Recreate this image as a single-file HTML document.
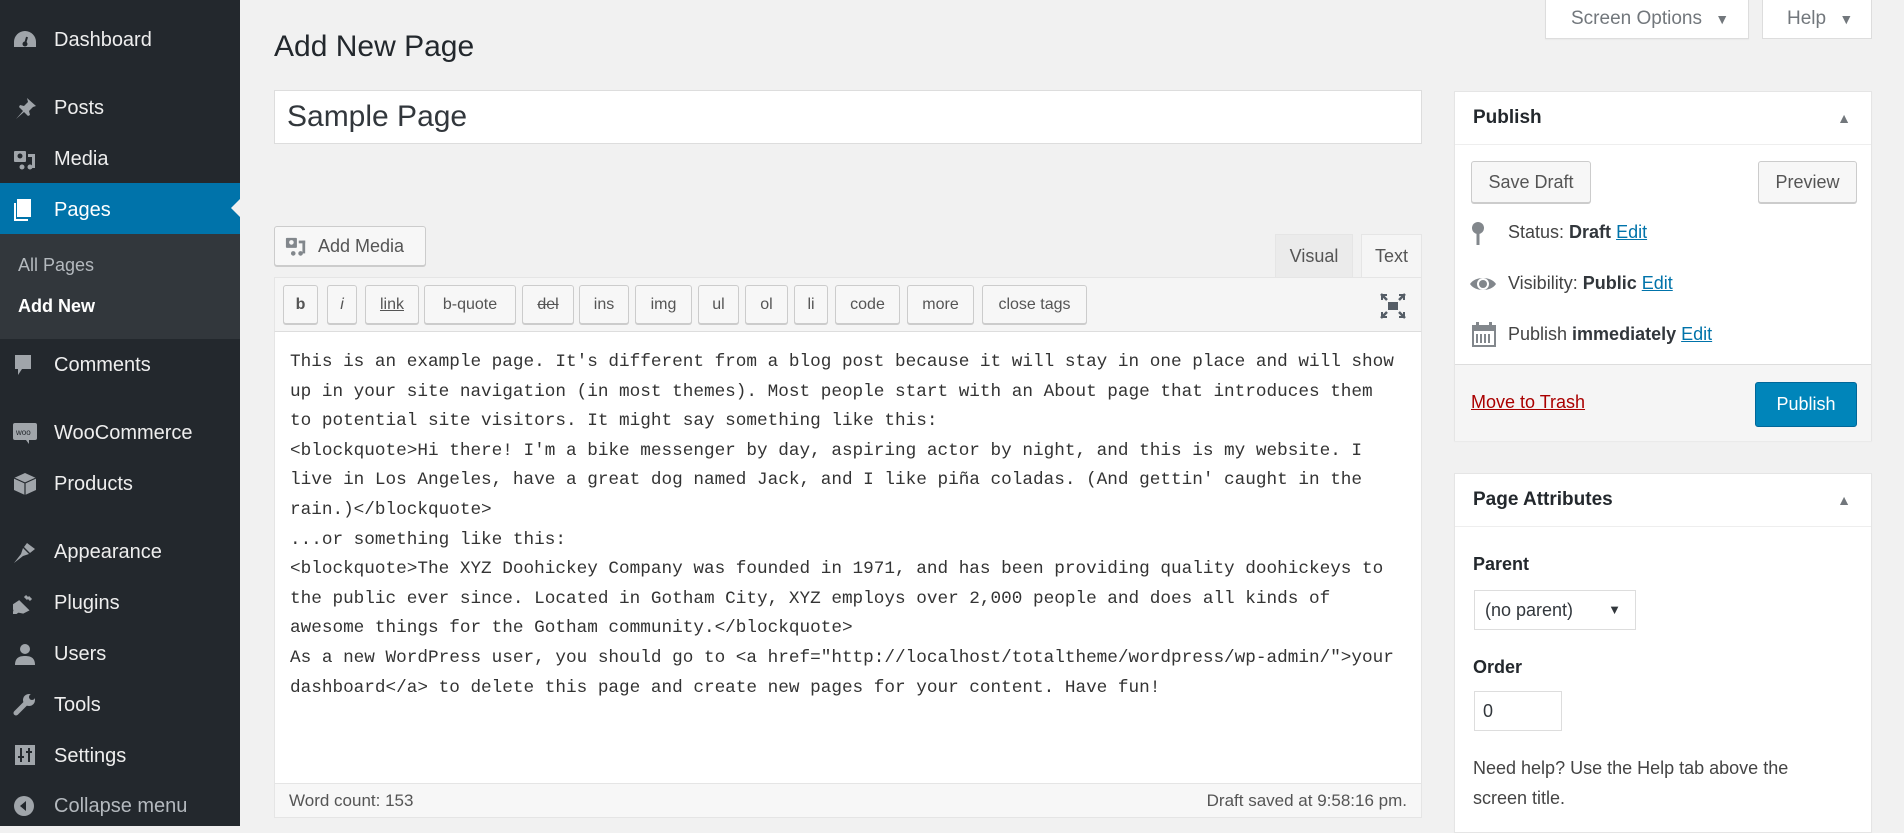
<!DOCTYPE html>
<html><head><meta charset="utf-8"><style>
*{box-sizing:border-box;margin:0;padding:0}
body{width:1904px;height:826px;overflow:hidden;background:#f1f1f1;font-family:"Liberation Sans",sans-serif;color:#444;position:relative}
.a{position:absolute}
#side{left:0;top:0;width:240px;height:826px;background:#23282d}
.mi{position:absolute;left:0;width:240px;height:40px;color:#eee;font-size:20px;line-height:40px;padding-left:54px}
.ic{position:absolute;left:13px;top:9px;width:24px;height:22px}
.btn{position:absolute;background:#f7f7f7;border:1px solid #ccc;border-radius:3px;box-shadow:0 1px 0 #ccc;color:#555;font-size:16px;text-align:center}
.tb{position:absolute;top:285px;height:39px;line-height:37px;background:#f7f7f7;border:1px solid #ccc;border-radius:3px;box-shadow:0 1px 0 #ccc;color:#555;font-size:16px;text-align:center}
.code{position:absolute;left:290px;top:348px;font-family:"Liberation Mono",monospace;font-size:17.7px;line-height:29.6px;color:#333;white-space:pre}
.box{position:absolute;background:#fff;border:1px solid #e5e5e5;box-shadow:0 1px 1px rgba(0,0,0,.04)}
a{color:#0073aa}
</style></head><body>
<div id="side" class="a">
 <div class="mi" style="top:20px"><svg class="ic" viewBox="0 0 24 22"><path d="M12 2A11 11 0 0 0 1 13v5h22v-5A11 11 0 0 0 12 2z" fill="#a0a5aa"/><circle cx="12" cy="15" r="2.5" fill="#23282d"/><path d="M12 15l2-7" stroke="#23282d" stroke-width="2"/></svg>Dashboard</div>
 <div class="mi" style="top:88px"><svg class="ic" viewBox="0 0 24 22"><path d="M14 1l9 8-3 1-4 4 1 4-2 1-4-4-8 7 7-8-4-4 1-2 4 1 4-4z" fill="#a0a5aa"/></svg>Posts</div>
 <div class="mi" style="top:139px"><svg class="ic" viewBox="0 0 24 22"><rect x="1" y="3" width="12" height="11" rx="1" fill="#a0a5aa"/><circle cx="7" cy="8" r="2.5" fill="#23282d"/><rect x="15" y="6" width="7" height="3" fill="#a0a5aa"/><rect x="19" y="6" width="3" height="14" fill="#a0a5aa"/><circle cx="17" cy="19" r="2.5" fill="#a0a5aa"/><circle cx="9" cy="19" r="2.5" fill="#a0a5aa"/></svg>Media</div>
 <div class="a" style="left:0;top:183px;width:240px;height:51px;background:#0073aa"></div>
 <div class="a" style="left:231px;top:199px;width:0;height:0;border:9px solid transparent;border-right-color:#f1f1f1;border-left:0"></div>
 <div class="mi" style="top:190px;color:#fff"><svg class="ic" viewBox="0 0 24 22"><rect x="4" y="0" width="14" height="18" fill="#fff"/><path d="M1 4v18h14v-2H3V4z" fill="#fff"/></svg>Pages</div>
 <div class="a" style="left:0;top:234px;width:240px;height:105px;background:#32373c"></div>
 <div class="a" style="left:18px;top:255px;font-size:18px;color:#b4b9be">All Pages</div>
 <div class="a" style="left:18px;top:296px;font-size:18px;color:#fff;font-weight:bold">Add New</div>
 <div class="mi" style="top:345px"><svg class="ic" viewBox="0 0 24 22"><path d="M2 1h16v14h-9l-4 6v-6H2z" fill="#a0a5aa"/></svg>Comments</div>
 <div class="mi" style="top:413px"><svg class="ic" viewBox="0 0 24 22"><rect x="0" y="1" width="24" height="17" rx="2" fill="#a0a5aa"/><path d="M13 18l3 4v-4z" fill="#a0a5aa"/><text x="3" y="13" font-size="8" fill="#23282d" font-family="Liberation Sans">woo</text></svg>WooCommerce</div>
 <div class="mi" style="top:464px"><svg class="ic" viewBox="0 0 24 22"><path d="M12 0l11 5v12l-11 5-11-5V5z" fill="#a0a5aa"/><path d="M1 5l11 5 11-5M12 10v12" stroke="#23282d" stroke-width="1.2" fill="none"/></svg>Products</div>
 <div class="mi" style="top:532px"><svg class="ic" viewBox="0 0 24 22"><path d="M14 2l8 6-5 4-6-6zM10 7l6 6-6 2-9 7 7-9z" fill="#a0a5aa"/></svg>Appearance</div>
 <div class="mi" style="top:583px"><svg class="ic" viewBox="0 0 24 22"><path d="M6 10l8 8-4 2-5-1-4 3 1-4-2-4zM12 4l3 3M18 8l-3-3" stroke="#a0a5aa" stroke-width="3" fill="#a0a5aa"/></svg>Plugins</div>
 <div class="mi" style="top:634px"><svg class="ic" viewBox="0 0 24 22"><circle cx="12" cy="6" r="5" fill="#a0a5aa"/><path d="M2 22c0-7 4-9 10-9s10 2 10 9z" fill="#a0a5aa"/></svg>Users</div>
 <div class="mi" style="top:685px"><svg class="ic" viewBox="0 0 24 22"><path d="M3 19l10-10" stroke="#a0a5aa" stroke-width="5" stroke-linecap="round"/><circle cx="16" cy="6" r="6" fill="#a0a5aa"/><circle cx="19" cy="3" r="3" fill="#23282d"/></svg>Tools</div>
 <div class="mi" style="top:736px"><svg class="ic" viewBox="0 0 24 22"><rect x="2" y="0" width="20" height="20" fill="#a0a5aa"/><path d="M8 3v14M5 12h6M16 3v14M13 7h6" stroke="#23282d" stroke-width="2"/></svg>Settings</div>
 <div class="mi" style="top:786px;color:#b4b9be"><svg class="ic" viewBox="0 0 24 22"><circle cx="11" cy="11" r="10" fill="#a0a5aa"/><path d="M13 6l-6 5 6 5z" fill="#23282d"/></svg>Collapse menu</div>
</div>

<div class="a" style="left:1545px;top:-1px;width:204px;height:40px;background:#fff;border:1px solid #ddd;box-shadow:0 1px 1px rgba(0,0,0,.04);font-size:19px;color:#72777c;line-height:38px;padding-left:25px">Screen Options <span style="font-size:14px;margin-left:8px">▼</span></div>
<div class="a" style="left:1762px;top:-1px;width:110px;height:40px;background:#fff;border:1px solid #ddd;font-size:19px;color:#72777c;line-height:38px;padding-left:24px">Help <span style="font-size:14px;margin-left:8px">▼</span></div>

<div class="a" style="left:274px;top:30px;font-size:30px;color:#23282d">Add New Page</div>
<div class="a" style="left:274px;top:90px;width:1148px;height:54px;background:#fff;border:1px solid #ddd;font-size:30px;color:#32373c;line-height:52px;padding-left:12px">Sample Page</div>

<div class="btn" style="left:274px;top:226px;width:152px;height:40px;line-height:38px;padding-left:22px;font-size:18px"><svg class="a" style="left:10px;top:9px" width="22" height="22" viewBox="0 0 24 22"><rect x="1" y="1" width="12" height="11" rx="1" fill="#82878c"/><circle cx="7" cy="6" r="2.5" fill="#f7f7f7"/><rect x="15" y="4" width="7" height="3" fill="#82878c"/><rect x="19" y="4" width="3" height="14" fill="#82878c"/><circle cx="17" cy="18" r="2.5" fill="#82878c"/><circle cx="9" cy="18" r="2.5" fill="#82878c"/></svg>Add Media</div>

<div class="a" style="left:1275px;top:234px;width:78px;height:44px;background:#ebebeb;border:1px solid #e5e5e5;font-size:18px;color:#555;line-height:42px;text-align:center">Visual</div>
<div class="a" style="left:1361px;top:234px;width:61px;height:45px;background:#f5f5f5;border:1px solid #e5e5e5;border-bottom:0;font-size:18px;color:#555;line-height:42px;text-align:center">Text</div>

<div class="a" style="left:274px;top:277px;width:1148px;height:549px;background:#fff;border:1px solid #e5e5e5"></div>
<div class="a" style="left:274px;top:277px;width:1148px;height:55px;background:#f5f5f5;border:1px solid #e5e5e5;border-bottom:1px solid #ddd"></div>
<div class="tb" style="left:283px;width:35px;font-weight:bold">b</div>
<div class="tb" style="left:327px;width:30px;font-style:italic">i</div>
<div class="tb" style="left:365px;width:54px;text-decoration:underline">link</div>
<div class="tb" style="left:424px;width:92px">b-quote</div>
<div class="tb" style="left:522px;width:52px;text-decoration:line-through">del</div>
<div class="tb" style="left:579px;width:50px">ins</div>
<div class="tb" style="left:635px;width:57px">img</div>
<div class="tb" style="left:698px;width:41px">ul</div>
<div class="tb" style="left:745px;width:43px">ol</div>
<div class="tb" style="left:794px;width:34px">li</div>
<div class="tb" style="left:835px;width:65px">code</div>
<div class="tb" style="left:907px;width:67px">more</div>
<div class="tb" style="left:982px;width:105px">close tags</div>
<svg class="a" style="left:1380px;top:293px" width="26" height="26" viewBox="0 0 26 26"><rect x="8" y="9" width="10" height="8" fill="#555d66"/><path d="M1 1l6 6M25 1l-6 6M1 25l6-6M25 25l-6-6" stroke="#555d66" stroke-width="2.5"/><path d="M1 1h6v2H3v4H1zM25 1h-6v2h4v4h2zM1 25h6v-2H3v-4H1zM25 25h-6v-2h4v-4h2z" fill="#555d66"/></svg>

<div class="code">This is an example page. It's different from a blog post because it will stay in one place and will show
up in your site navigation (in most themes). Most people start with an About page that introduces them
to potential site visitors. It might say something like this:
&lt;blockquote&gt;Hi there! I'm a bike messenger by day, aspiring actor by night, and this is my website. I
live in Los Angeles, have a great dog named Jack, and I like piña coladas. (And gettin' caught in the
rain.)&lt;/blockquote&gt;
...or something like this:
&lt;blockquote&gt;The XYZ Doohickey Company was founded in 1971, and has been providing quality doohickeys to
the public ever since. Located in Gotham City, XYZ employs over 2,000 people and does all kinds of
awesome things for the Gotham community.&lt;/blockquote&gt;
As a new WordPress user, you should go to &lt;a href="http://localhost/totaltheme/wordpress/wp-admin/"&gt;your
dashboard&lt;/a&gt; to delete this page and create new pages for your content. Have fun!</div>

<div class="a" style="left:274px;top:783px;width:1148px;height:35px;background:#f7f7f7;border:1px solid #e5e5e5;font-size:17px;color:#555;line-height:33px;padding:0 14px">Word count: 153<span style="float:right">Draft saved at 9:58:16 pm.</span></div>
<div class="a" style="left:240px;top:818px;width:1664px;height:8px;background:#f1f1f1"></div>

<div class="box" style="left:1454px;top:91px;width:418px;height:350px">
 <div class="a" style="left:0;top:0;width:416px;height:53px;border-bottom:1px solid #eee;font-size:19px;font-weight:bold;color:#23282d;line-height:52px;padding-left:18px">Publish<span style="float:right;margin-right:20px;font-size:14px;color:#72777c">▲</span></div>
 <div class="btn" style="left:16px;top:69px;width:120px;height:42px;line-height:40px;font-size:18px">Save Draft</div>
 <div class="btn" style="left:303px;top:69px;width:99px;height:42px;line-height:40px;font-size:18px">Preview</div>
 <svg class="a" style="left:16px;top:129px" width="14" height="26" viewBox="0 0 14 26"><circle cx="7" cy="7" r="6" fill="#82878c"/><rect x="5.5" y="10" width="3" height="14" fill="#82878c"/></svg>
 <div class="a" style="left:53px;top:130px;font-size:18px">Status: <b style="color:#32373c">Draft</b> <a href="#">Edit</a></div>
 <svg class="a" style="left:14px;top:183px" width="28" height="18" viewBox="0 0 28 18"><path d="M1 9C6 1 22 1 27 9 22 17 6 17 1 9z" fill="#82878c"/><circle cx="14" cy="9" r="6" fill="#fff"/><circle cx="14" cy="9" r="4" fill="#82878c"/></svg>
 <div class="a" style="left:53px;top:181px;font-size:18px">Visibility: <b style="color:#32373c">Public</b> <a href="#">Edit</a></div>
 <svg class="a" style="left:16px;top:230px" width="26" height="26" viewBox="0 0 26 26"><rect x="1" y="3" width="24" height="22" fill="#82878c"/><rect x="3" y="9" width="20" height="14" fill="#fff"/><path d="M6 12v9M10 12v9M14 12v9M18 12v9" stroke="#82878c" stroke-width="2"/><rect x="5" y="0" width="3" height="5" fill="#82878c"/><rect x="18" y="0" width="3" height="5" fill="#82878c"/></svg>
 <div class="a" style="left:53px;top:232px;font-size:18px">Publish <b style="color:#32373c">immediately</b> <a href="#">Edit</a></div>
 <div class="a" style="left:0;top:272px;width:416px;height:77px;background:#f5f5f5;border-top:1px solid #ddd"></div>
 <div class="a" style="left:16px;top:300px;font-size:18px"><a href="#" style="color:#a00">Move to Trash</a></div>
 <div class="a" style="left:300px;top:290px;width:102px;height:45px;background:#0085ba;border:1px solid #006799;border-radius:3px;color:#fff;font-size:18px;line-height:43px;text-align:center">Publish</div>
</div>

<div class="box" style="left:1454px;top:473px;width:418px;height:360px">
 <div class="a" style="left:0;top:0;width:416px;height:53px;border-bottom:1px solid #eee;font-size:19px;font-weight:bold;color:#23282d;line-height:52px;padding-left:18px">Page Attributes<span style="float:right;margin-right:20px;font-size:14px;color:#72777c">▲</span></div>
 <div class="a" style="left:18px;top:80px;font-size:18px;font-weight:bold;color:#23282d">Parent</div>
 <div class="a" style="left:19px;top:116px;width:162px;height:40px;border:1px solid #ddd;font-size:18px;line-height:38px;padding-left:10px;color:#32373c">(no parent)<span style="position:absolute;right:14px;font-size:13px">▼</span></div>
 <div class="a" style="left:18px;top:183px;font-size:18px;font-weight:bold;color:#23282d">Order</div>
 <div class="a" style="left:19px;top:217px;width:88px;height:40px;border:1px solid #ddd;font-size:18px;line-height:38px;padding-left:8px;color:#32373c">0</div>
 <div class="a" style="left:18px;top:279px;width:360px;font-size:18px;line-height:30px">Need help? Use the Help tab above the screen title.</div>
</div>
</body></html>
